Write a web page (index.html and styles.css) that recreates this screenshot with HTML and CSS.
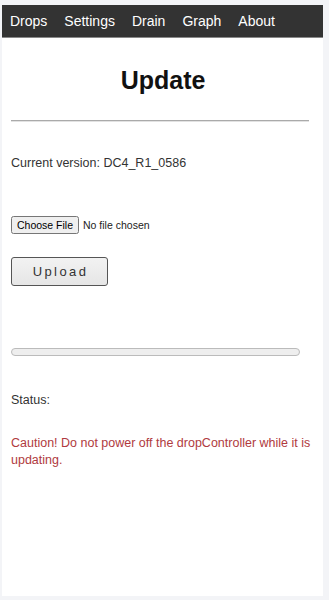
FILE: index.html
```
<!DOCTYPE html>
<html>
<head>
<meta charset="utf-8">
<link rel="stylesheet" href="styles.css">
</head>
<body>
<div class="page">
  <nav class="nav">
    <a class="nav-item">Drops</a>
    <a class="nav-item">Settings</a>
    <a class="nav-item">Drain</a>
    <a class="nav-item">Graph</a>
    <a class="nav-item">About</a>
  </nav>
  <main class="content">
    <h1 class="title">Update</h1>
    <div class="rule"></div>
    <p class="version">Current version: DC4_R1_0586</p>
    <div class="file-row"><input class="file" type="file"></div>
    <button class="upload">Upload</button>
    <div class="progress"></div>
    <p class="status">Status:</p>
    <p class="caution">Caution! Do not power off the dropController while it is updating.</p>
  </main>
</div>
</body>
</html>
```
FILE: styles.css
```
html, body {
  margin: 0;
  padding: 0;
  background: #f3f4f7;
}
body {
  font-family: "Liberation Sans", Arial, sans-serif;
  color: #222;
}
.page {
  margin: 5px 6px 4px 2px;
  height: 591px;
  background: #fff;
  display: flex;
  flex-direction: column;
}
.nav {
  height: 33px;
  background: #333;
  border-bottom: 1px solid #888;
  box-sizing: border-box;
  display: flex;
  align-items: center;
  padding-left: 8px;
  gap: 17px;
}
.nav-item {
  color: #fff;
  font-size: 14px;
}
.content {
  padding: 0 8px 0 9px;
}
.title {
  margin: 28px 0 0;
  font-size: 25px;
  line-height: 29px;
  text-align: center;
  font-weight: bold;
  color: #111;
}
.rule {
  margin-top: 25px;
  height: 1px;
  background: #aaa;
  border-bottom: 1px solid #e2e2e2;
  margin-right: 6px;
}
.version {
  margin: 34px 0 0;
  font-size: 12.5px;
  line-height: 15px;
  color: #333;
}
.file-row {
  margin-top: 44px;
  height: 17px;
}
.file {
  font-family: "Liberation Sans", Arial, sans-serif;
  font-size: 10.5px;
  color: #222;
}
.file::file-selector-button {
  font-family: "Liberation Sans", Arial, sans-serif;
  font-size: 10.5px;
  padding: 1px 4px;
  margin-right: 4px;
}
.upload {
  display: block;
  margin-top: 25px;
  width: 97px;
  height: 29px;
  border: 1px solid #555;
  border-radius: 3px;
  background: linear-gradient(#f2f2f2, #e6e6e6);
  font-family: "Liberation Sans", Arial, sans-serif;
  font-size: 13px;
  letter-spacing: 2.4px;
  color: #333;
  padding: 0 0 0 2px;
}
.progress {
  margin-top: 62px;
  width: 287px;
  height: 6px;
  border: 1px solid #bbb;
  border-radius: 4px;
  background: #eee;
}
.status {
  margin: 37px 0 0;
  font-size: 12.5px;
  line-height: 15px;
  color: #333;
}
.caution {
  margin: 27px 0 0;
  font-size: 12.5px;
  line-height: 17px;
  color: #b03a40;
}
```
